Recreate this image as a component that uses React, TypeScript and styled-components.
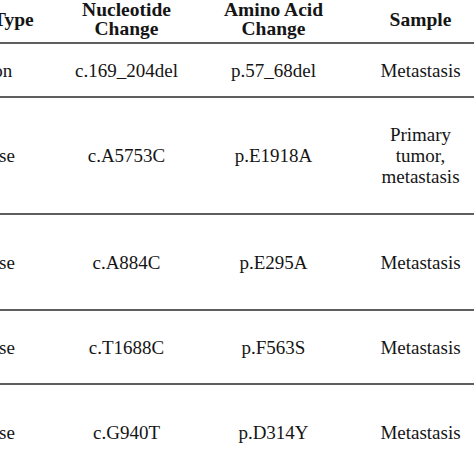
import React from "react";
import styled, { createGlobalStyle } from "styled-components";

const Global = createGlobalStyle`
  html, body {
    margin: 0;
    padding: 0;
    background: #ffffff;
    overflow: hidden;
  }
  body {
    font-family: "Liberation Serif", "DejaVu Serif", serif;
    color: #141414;
  }
`;

const Table = styled.div`
  width: 588px;
  margin-left: -94px;
  margin-top: -4px;
  display: flex;
  flex-direction: column;
`;

const Row = styled.div<{ $h: number; $line?: boolean }>`
  display: grid;
  grid-template-columns: repeat(4, 147px);
  height: ${(p) => p.$h}px;
  box-sizing: border-box;
  border-bottom: ${(p) => (p.$line ? "2px solid #5e5e5e" : "none")};
`;

const Cell = styled.div<{ $head?: boolean }>`
  display: flex;
  align-items: center;
  justify-content: center;
  text-align: center;
  font-size: ${(p) => (p.$head ? "19.5px" : "19px")};
  font-weight: ${(p) => (p.$head ? 700 : 400)};
  line-height: ${(p) => (p.$head ? "19px" : "21px")};
  white-space: pre-line;
  color: #151515;
`;

const header = ["Variant Type", "Nucleotide\nChange", "Amino Acid\nChange", "Sample"];

const rows: { h: number; line: boolean; cells: string[] }[] = [
  { h: 54, line: true, cells: ["Deletion", "c.169_204del", "p.57_68del", "Metastasis"] },
  { h: 117, line: true, cells: ["Missense", "c.A5753C", "p.E1918A", "Primary\ntumor,\nmetastasis"] },
  { h: 96, line: true, cells: ["Missense", "c.A884C", "p.E295A", "Metastasis"] },
  { h: 74, line: true, cells: ["Missense", "c.T1688C", "p.F563S", "Metastasis"] },
  { h: 95, line: false, cells: ["Missense", "c.G940T", "p.D314Y", "Metastasis"] },
];

export default function App() {
  return (
    <>
      <Global />
      <Table>
        <Row $h={48} $line>
          {header.map((t) => (
            <Cell $head key={t}>
              {t}
            </Cell>
          ))}
        </Row>
        {rows.map((r, i) => (
          <Row $h={r.h} $line={r.line} key={i}>
            {r.cells.map((c, j) => (
              <Cell key={j}>{c}</Cell>
            ))}
          </Row>
        ))}
      </Table>
    </>
  );
}
